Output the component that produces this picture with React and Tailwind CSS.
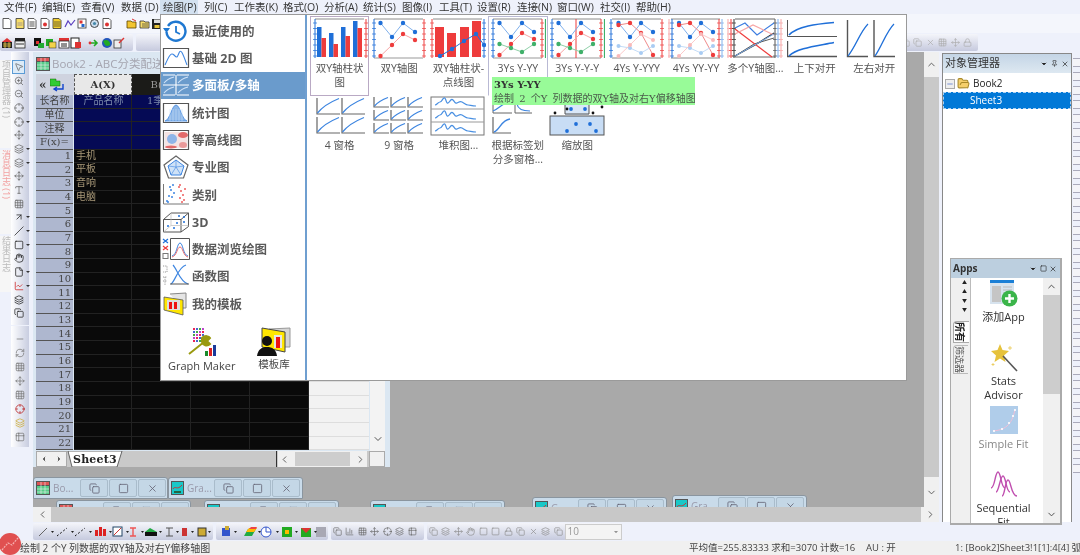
import {
  File, FolderOpen, Table2, LineChart, RefreshCw, Copy, Grid3x3,
  MousePointer2, ZoomIn, ZoomOut, Crosshair, Move, Type, Square, Hand, ArrowUpRight, Slash,
  ChevronUp, ChevronDown, ChevronLeft, ChevronRight, Minus, Pin, X, Lock, Layers, BarChart3,
} from "lucide-react";

const cjk = "font-['Open_Sans','Noto_Sans_CJK_SC',sans-serif]";
const serif = "font-['DejaVu_Serif','Noto_Sans_CJK_SC',serif]";

const menus = [
  ["文件(F)", "w-[38px]"], ["编辑(E)", "w-[39px]"], ["查看(V)", "w-[40px]"], ["数据 (D)", "w-[39px]"],
  ["绘图(P)", "w-[38px] pl-[3px] bg-[#d3e1f0]"], ["列(C)", "w-[36px] pl-[6px]"], ["工作表(K)", "w-[49px]"], ["格式(O)", "w-[41px]"],
  ["分析(A)", "w-[39px]"], ["统计(S)", "w-[39px]"], ["图像(I)", "w-[37px]"], ["工具(T)", "w-[38px]"],
  ["设置(R)", "w-[40px]"], ["连接(N)", "w-[40px]"], ["窗口(W)", "w-[43px]"], ["社交(I)", "w-[36px]"], ["帮助(H)", "w-[40px]"],
];

const sideItems = [
  ["最近使用的", <RecentIcon />], ["基础 2D 图", <WaveIcon />], ["多面板/多轴", <PanelsIcon />], ["统计图", <BellIcon />],
  ["等高线图", <ContourIcon />], ["专业图", <RadarIcon />], ["类别", <DotsIcon />], ["3D", <CubeIcon />],
  ["数据浏览绘图", <BrowseIcon />], ["函数图", <FuncIcon />], ["我的模板", <TemplateIcon />],
];

const B = "#1f6fd8", LB = "#7fb0ec", R = "#ee3c3c", LR = "#f7a6a6", G = "#3fb06a";
const X4 = [9.5, 21, 32, 44];

function Poly({ xs, ys, color, dot = 2.2, w = 1 }) {
  return (
    <>
      <polyline points={xs.map((x, i) => `${x},${ys[i]}`).join(" ")} fill="none" stroke={color} strokeWidth={w} />
      {xs.map((x, i) => <circle key={i} cx={x} cy={ys[i]} r={dot} fill={color} />)}
    </>
  );
}

function Ticks({ x, color, from = 5, to = 38, step = 5.5 }) {
  const ys = [];
  for (let y = from; y <= to; y += step) ys.push(y);
  return (
    <>
      <line x1={x} y1={1} x2={x} y2={40} stroke={color} strokeWidth="1" />
      {ys.map((y) => <line key={y} x1={x - 2} y1={y} x2={x + 2} y2={y} stroke={color} strokeWidth=".7" />)}
    </>
  );
}

function Tile({ children }) {
  return <svg width="56" height="42" viewBox="0 0 56 42">{children}</svg>;
}

function FrameTop({ right = 52 }) {
  return <line x1="3" y1="1" x2={right} y2="1" stroke="#8a8a8a" strokeWidth="1" />;
}

const topIcons = [
  <Tile>
    <FrameTop /><Ticks x={3} color={B} /><Ticks x={54} color={R} />
    {[[5, 9, 20], [17, 15, 26], [29, 9, 18], [41, 3, 10]].map(([x, a, b]) => (
      <g key={x}>
        <rect x={x} y={a} width="4.5" height={39 - a} fill={B} />
        <rect x={x + 4.5} y={b} width="4.5" height={39 - b} fill={R} />
      </g>
    ))}
  </Tile>,
  <Tile>
    <FrameTop /><line x1="3" y1="40" x2="52" y2="40" stroke="#999" /><Ticks x={3} color={B} /><Ticks x={53} color={R} />
    <Poly xs={X4} ys={[5, 19, 5, 14]} color={LB} dot={0} />
    <Poly xs={X4} ys={[38, 27, 16, 22]} color={LR} dot={0} />
    {X4.map((x, i) => <circle key={x} cx={x} cy={[5, 19, 5, 14][i]} r="2.2" fill={B} />)}
    {X4.map((x, i) => <circle key={x} cx={x} cy={[38, 27, 16, 22][i]} r="2.2" fill={R} />)}
  </Tile>,
  <Tile>
    <FrameTop /><Ticks x={2} color={R} /><Ticks x={54} color={B} />
    {[[5, 9], [17, 15], [30, 9], [42, 3]].map(([x, t]) => <rect key={x} x={x} y={t} width="9" height={39 - t} fill={R} />)}
    <Poly xs={[10, 22, 34, 46, 54]} ys={[38, 31, 23, 16, 27]} color={B} />
  </Tile>,
  <ThreeYs />,
  <ThreeYs split />,
  <FourYs />,
  <FourYs both />,
  <Tile>
    {[1, 4, 7].map((x, i) => <Ticks key={x} x={x} color={[LR, R, "#333"][i]} />)}
    {[48, 51, 54].map((x, i) => <Ticks key={x} x={x} color={["#555", LB, LR][i]} />)}
    <line x1="8" y1="1" x2="48" y2="1" stroke="#666" />
    <line x1="8" y1="39" x2="48" y2="39" stroke="#666" />
    <polyline points="8,38 28,27 47,15" fill="none" stroke="#333" strokeWidth="1.4" />
    <polyline points="8,38 27,26 47,20" fill="none" stroke="#333" strokeWidth=".8" />
    <polyline points="8,10 18,5 30,17 47,5" fill="none" stroke="#3d7de0" strokeWidth="1.2" />
    <polyline points="8,11 45,39" fill="none" stroke={R} strokeWidth="1.2" />
    <polyline points="8,16 26,7 47,17" fill="none" stroke={LR} strokeWidth="1.2" />
    <polyline points="8,38 47,16" fill="none" stroke={LB} strokeWidth="1" />
  </Tile>,
  <Tile>
    <path d="M.5 2V18.5H50" fill="none" stroke="#555" strokeWidth="1" />
    <path d="M2 17C10 8 30 6 47 4.5" fill="none" stroke={B} strokeWidth="1.6" />
    <path d="M.5 23V38.5H50" fill="none" stroke="#555" strokeWidth="1.4" />
    <path d="M2 38C10 30 30 28 47 24.5" fill="none" stroke={B} strokeWidth="1.6" />
  </Tile>,
  <Tile>
    <path d="M1.5 2V38.5H22" fill="none" stroke="#555" strokeWidth="1.4" />
    <path d="M2 38C10 28 14 14 22 6" fill="none" stroke={B} strokeWidth="1.2" />
    <path d="M28 2V38.5H49" fill="none" stroke="#555" strokeWidth="1.4" />
    <path d="M29 38C36 28 40 14 48 6" fill="none" stroke={B} strokeWidth="1.2" />
  </Tile>,
];

function ThreeYs({ split }) {
  return (
    <Tile>
      <FrameTop /><line x1="3" y1="40" x2="52" y2="40" stroke="#999" /><Ticks x={3} color={B} />
      <Ticks x={52} color={R} /><line x1="55.5" y1="1" x2="55.5" y2="40" stroke={G} strokeWidth="1.2" />
      {split && <line x1="27" y1="1" x2="27" y2="40" stroke={R} strokeWidth="1" />}
      <polyline points="9.5,5 21,19 32,5 44,14" fill="none" stroke={LB} />
      <polyline points="9.5,37 21,26 32,15 44,21" fill="none" stroke={LR} />
      <polyline points="9.5,26 21,30 32,34 44,26" fill="none" stroke="#8fd0a8" />
      {X4.map((x, i) => (
        <g key={x}>
          <circle cx={x} cy={[5, 19, 5, 14][i]} r="2.2" fill={B} />
          <circle cx={x} cy={[37, 26, 15, 21][i]} r="2.2" fill={R} />
          <circle cx={x} cy={[26, 30, 34, 26][i]} r="2.2" fill={G} />
        </g>
      ))}
    </Tile>
  );
}

function FourYs({ both }) {
  const xs = both ? [11, 22, 33, 45] : X4;
  return (
    <Tile>
      <FrameTop /><line x1="3" y1="40" x2="52" y2="40" stroke="#888" /><Ticks x={both ? 4 : 2} color={B} />
      {both && <Ticks x={1} color={LR} />}
      <Ticks x={both ? 51 : 53} color={R} />
      {both && <Ticks x={54} color={LB} />}
      <polyline points={xs.map((x, i) => `${x},${[5, 19, 5, 14][i]}`).join(" ")} fill="none" stroke={LB} />
      <polyline points={xs.map((x, i) => `${x},${[7, 5, 15, 37][i]}`).join(" ")} fill="none" stroke="#ef8a8a" />
      <polyline points={xs.map((x, i) => `${x},${[28, 30, 35, 28][i]}`).join(" ")} fill="none" stroke="#c4dcf7" />
      <polyline points={xs.map((x, i) => `${x},${[38, 27, 16, 22][i]}`).join(" ")} fill="none" stroke="#fbcaca" />
      {xs.map((x, i) => (
        <g key={x}>
          <circle cx={x} cy={[5, 19, 5, 14][i]} r="2.2" fill={B} />
          <circle cx={x} cy={[7, 5, 15, 37][i]} r="2.2" fill={R} />
          <circle cx={x} cy={[28, 30, 35, 28][i]} r="2" fill="#a9ccf3" />
          <circle cx={x} cy={[38, 27, 16, 22][i]} r="2" fill="#f9b9b9" />
        </g>
      ))}
    </Tile>
  );
}

function Panes({ cols, rows, cw, ch, ox = 0, oy = 0, weight = 1.2 }) {
  const cells = [];
  for (let r = 0; r < rows; r++) for (let c = 0; c < cols; c++) cells.push([ox + c * cw, oy + r * ch]);
  return (
    <>
      {cells.map(([x, y]) => (
        <g key={`${x}-${y}`}>
          <path d={`M${x + 1} ${y + 1}V${y + ch - 2}H${x + cw - 1}`} fill="none" stroke="#666" strokeWidth={weight} />
          <path d={`M${x + 1.5} ${y + ch - 3}C${x + cw * .3} ${y + ch * .45} ${x + cw * .6} ${y + ch * .25} ${x + cw - 2} ${y + 1.5}`} fill="none" stroke="#3d85e0" strokeWidth="1.2" />
        </g>
      ))}
    </>
  );
}

const wave = "c2 0 3-3 5-3s2-3 4-4 2 6 4 5 3-5 5-3 2 4 4 3 3-2 5-1 4 3 6 3 4 1 8 1";
const bottomIcons = [
  <Tile><Panes cols={2} rows={2} cw={25} ch={19} ox={4} oy={1} /></Tile>,
  <Tile><Panes cols={3} rows={3} cw={17} ch={13} ox={2} /></Tile>,
  <Tile>
    <rect x="1" y="1" width="53" height="38" fill="none" stroke="#777" />
    <line x1="1" y1="13" x2="54" y2="13" stroke="#999" /><line x1="1" y1="26" x2="54" y2="26" stroke="#999" />
    {[9, 22, 35].map((y) => <path key={y} d={`M5 ${y}${wave}`} fill="none" stroke="#4a90e2" strokeWidth="1.2" />)}
  </Tile>,
  <Tile>
    <path d="M3 8V17H22M25 8V17H42" fill="none" stroke="#666" strokeWidth="1" />
    <path d="M3 15C8 13 10 10 14 8M27 8C28 14 34 15 40 15" fill="none" stroke="#3d85e0" strokeWidth="1.2" />
    <path d="M3 21V37H21" fill="none" stroke="#666" strokeWidth="1.2" />
    <path d="M4 36C10 34 11 24 20 23" fill="none" stroke="#3d85e0" strokeWidth="1.4" />
  </Tile>,
  <Tile>
    <rect x="1" y="20" width="54" height="19" fill="#c8ddf5" stroke="#555" />
    <rect x="16" y="9" width="24" height="10" fill="#d9e7f8" />
    <path d="M16 8V18H40V8" fill="none" stroke="#555" />
    {[[6, 17], [18, 13], [44, 17], [53, 11]].map(([x, y]) => <circle key={x} cx={x} cy={y} r="1.4" fill="#111" />)}
    {[[22, 13], [36, 13], [18, 35], [27, 28], [41, 28], [47, 35]].map(([x, y]) => <circle key={`${x}${y}`} cx={x} cy={y} r="1.9" fill={B} />)}
  </Tile>,
];

const topLabels = [["双Y轴柱状", "图"], ["双Y轴图"], ["双Y轴柱状-", "点线图"], ["3Ys Y-YY"], ["3Ys Y-Y-Y"], ["4Ys Y-YYY"], ["4Ys YY-YY"], ["多个Y轴图..."], ["上下对开"], ["左右对开"]];
const bottomLabels = [["4 窗格"], ["9 窗格"], ["堆积图..."], ["根据标签划", "分多窗格..."], ["缩放图"]];

function IconBox({ children }) {
  return <svg width="28" height="24" viewBox="0 0 28 24" className="shrink-0">{children}</svg>;
}
function BoxFrame() {
  return <path d="M1.5 2.5H26.5V21.5H1.5Z" fill="#fff" stroke="#555" strokeWidth="1.2" />;
}
function RecentIcon() {
  return (
    <IconBox>
      <path d="M6 7A9.5 9.5 0 1 1 4.5 13" fill="none" stroke="#1f78d1" strokeWidth="2.4" />
      <path d="M1 9h7l-3.5 5z" fill="#1f78d1" />
      <path d="M14 7V13L18 15" fill="none" stroke="#1f78d1" strokeWidth="1.8" />
    </IconBox>
  );
}
function WaveIcon() {
  return <IconBox><BoxFrame /><path d="M3 19C7 10 9 6 12 9S15 12 17 7 21 8 25 19" fill="none" stroke="#3d85e0" strokeWidth="1.1" /></IconBox>;
}
function PanelsIcon() {
  return (
    <IconBox>
      <g fill="none" stroke="#fff" strokeWidth="1.1">
        <path d="M1 2H13M15 2H27M1 12H27M14 2V22M1 22H13M15 22H27" />
        <path d="M2 10C5 6 8 5 12 4M16 10C19 6 22 5 26 4M2 20C5 16 8 15 12 14M16 20C19 16 22 15 26 14" stroke="#cfe2f7" />
      </g>
    </IconBox>
  );
}
function BellIcon() {
  return (
    <IconBox>
      <BoxFrame />
      <path d="M3 20C8 19 10 4 14 4S20 19 25 20Z" fill="#8fb8e8" stroke="#3d85e0" strokeWidth=".8" />
      {[8, 11, 14, 17, 20].map((x) => <line key={x} x1={x} y1="8" x2={x} y2="20" stroke="#c9dff5" strokeWidth=".6" />)}
    </IconBox>
  );
}
function ContourIcon() {
  return (
    <IconBox>
      <BoxFrame />
      <rect x="3" y="4" width="22" height="16" fill="#f4e3e3" />
      <ellipse cx="10" cy="11" rx="5" ry="5" fill="#8fb5e8" />
      <ellipse cx="21" cy="7" rx="5" ry="3" fill="#e26a6a" />
      <ellipse cx="21" cy="17" rx="4" ry="3" fill="#ea9a9a" />
      <ellipse cx="9" cy="19" rx="6" ry="1.5" fill="#e26a6a" />
    </IconBox>
  );
}
function RadarIcon() {
  return (
    <IconBox>
      <path d="M14 1L26 10L21.5 23H6.5L2 10Z" fill="#fff" stroke="#666" strokeWidth="1.2" />
      <path d="M14 5L22 11L19 20L9 20L6 11Z" fill="#cfe2f7" stroke="#3d85e0" />
      <path d="M14 12V5M14 12L22 11M14 12L19 20M14 12L9 20M14 12L6 11" stroke="#3d85e0" strokeWidth=".6" />
    </IconBox>
  );
}
function DotsIcon() {
  const blue = [[5, 19], [7, 14], [9, 8], [6, 20], [10, 15], [12, 11], [8, 5], [11, 3]];
  const red = [[17, 5], [19, 9], [21, 13], [18, 16], [22, 18], [20, 20], [23, 7], [18, 3]];
  return (
    <IconBox>
      <path d="M1.5 2V22H27" fill="none" stroke="#777" />
      {blue.map(([x, y]) => <circle key={`${x}${y}`} cx={x} cy={y} r="1" fill="#3d85e0" />)}
      {red.map(([x, y]) => <circle key={`${x}${y}`} cx={x} cy={y} r="1" fill="#ee5c5c" />)}
    </IconBox>
  );
}
function CubeIcon() {
  return (
    <IconBox>
      <path d="M1.5 9.5L9 3H26.5V16.5L19 22H1.5ZM1.5 9.5H19V22M19 9.5L26.5 3" fill="#fff" stroke="#555" />
      <path d="M1.5 22L9 15.5V3M9 15.5H26.5" fill="none" stroke="#bbb" strokeWidth=".7" />
      {[[6, 16], [12, 18], [15, 13], [17, 6], [22, 7], [22, 12]].map(([x, y]) => <circle key={`${x}${y}`} cx={x} cy={y} r="1" fill={B} />)}
    </IconBox>
  );
}
function BrowseIcon() {
  return (
    <IconBox>
      <path d="M8.5 1.5H27.5V22.5H8.5Z" fill="#fff" stroke="#555" />
      <path d="M10 19C15 18 15 6 18 6S21 18 26 19" fill="none" stroke="#3d85e0" />
      <path d="M10 20C15 19 15 10 18 10S21 19 26 20" fill="none" stroke="#ee6a6a" />
      <path d="M1 2L6 6M6 2L1 6" stroke={B} strokeWidth="1.2" />
      <path d="M1 9L6 13M6 9L1 13" stroke={R} strokeWidth="1.2" />
      <rect x="1" y="16.5" width="5" height="5" fill="#fff" stroke="#777" />
    </IconBox>
  );
}
function FuncIcon() {
  return (
    <IconBox>
      <path d="M9 20C13 18 16 3 24 1M11 1C15 5 18 18 26 20" fill="none" stroke="#3d85e0" strokeWidth="1.2" />
      <path d="M8 20H27" stroke="#555" />
      <path d="M1 2H5V8H1M1 13H5M1 17H5M3 13V21" fill="none" stroke="#999" strokeDasharray="1.2 1" />
    </IconBox>
  );
}
function TemplateIcon() {
  return (
    <IconBox>
      <path d="M8 2L24 1V16H20" fill="#e5e5e5" stroke="#888" />
      <path d="M2 5L21 8V23L2 18Z" fill="#ffe600" stroke="#555" strokeWidth=".8" />
      <rect x="5" y="8" width="13" height="10" fill="#ddd" />
      <rect x="7" y="10" width="3" height="7" fill="#e11" /><rect x="12" y="10" width="3" height="7" fill="#e11" />
    </IconBox>
  );
}

function Dropdown() {
  return (
    <div className={`absolute left-[160px] top-[14px] flex h-[367px] w-[747px] border border-[#9a9a9a] bg-white ${cjk}`}>
      <div className="flex w-[144px] flex-col pt-[2px]">
        {sideItems.map(([label, icon], i) => (
          <div key={label} className={`flex h-[27.3px] items-center gap-[2px] pl-[1px] text-[12.5px] font-bold ${i === 2 ? "bg-[#6a9bcc] text-white" : "text-[#5a5a5a]"}`}>
            {icon}
            <span className="whitespace-nowrap pt-[3px]">{label}</span>
          </div>
        ))}
        <div className="mt-[10px] flex justify-between pl-[7px] pr-[14px]">
          <div className="flex flex-col items-center">
            <svg width="30" height="30" viewBox="0 0 30 30">
              {[0, 1, 2, 3].map((c) => [0, 1, 2, 3, 4].map((r) => <rect key={`${c}${r}`} x={6 + c * 3} y={1 + r * 3} width="2" height="2" fill={["#e25", "#46c", "#4a4", "#b4c"][(c + r) % 4]} />))}
              <path d="M2 27L17 15M15 11C18 8 22 9 23 11L20 14L23 17C20 20 16 18 15 15Z" fill="#9a9a10" stroke="#9a9a10" strokeWidth="2" />
              <rect x="18" y="24" width="3" height="5" fill="#1a8a2a" /><rect x="22" y="21" width="3" height="8" fill="#d22" /><rect x="26" y="18" width="3" height="11" fill="#1a3a9a" />
            </svg>
            <span className="mt-[1px] whitespace-nowrap text-[11px] text-[#444]">Graph Maker</span>
          </div>
          <div className="flex flex-col items-center">
            <svg width="34" height="30" viewBox="0 0 34 30">
              <path d="M12 2L33 1V20H26" fill="#d5d5d5" stroke="#999" />
              <path d="M5 1L28 5V25L5 20Z" fill="#ffe600" stroke="#444" />
              <rect x="17" y="8" width="8" height="13" fill="#e5e5e5" /><rect x="19" y="10" width="4" height="11" fill="#e11" />
              <circle cx="10" cy="14" r="5" fill="#111" /><path d="M0 29C1 22 5 20 10 20S19 22 20 29Z" fill="#111" />
            </svg>
            <span className="whitespace-nowrap text-[10.5px] text-[#444]">模板库</span>
          </div>
        </div>
      </div>
      <div className="w-[2px] bg-[#6f9fd0]" />
      <div className="flex-1 pl-[3px] pt-[1px] text-center text-[10.5px] leading-[14px] text-[#555]">
        <div className="grid grid-cols-[repeat(10,59.4px)]">
          {topIcons.map((icon, i) => (
            <div key={i} className={`flex h-[80px] flex-col items-center border pt-[1px] ${i === 0 ? "border-[#b9a9c4]" : i === 3 ? "border-[#b9b9d4] border-b-transparent" : "border-transparent"}`}>
              {icon}
              <div className="mt-[1px] whitespace-nowrap">{topLabels[i].map((t) => <div key={t}>{t}</div>)}</div>
            </div>
          ))}
          {bottomIcons.map((icon, i) => (
            <div key={i} className="flex flex-col items-center">
              {icon}
              <div className="whitespace-nowrap">{bottomLabels[i].map((t) => <div key={t}>{t}</div>)}</div>
            </div>
          ))}
        </div>
      </div>
      <div className={`absolute left-[331px] top-[62px] h-[28px] w-[203px] bg-[#98fb98] px-[2px] pt-[1px] text-[10px] leading-[13.5px] text-[#333] ${serif}`}>
        <div className="font-bold">3Ys Y-YY</div>
        <div className="whitespace-nowrap text-[#4a5a4a] [word-spacing:2px]">绘制 2 个Y 列数据的双Y轴及对右Y偏移轴图</div>
      </div>
    </div>
  );
}

function TableIcon() {
  return (
    <svg width="14" height="14" viewBox="0 0 14 14" className="shrink-0">
      <rect width="14" height="14" fill="#555" /><rect x="1" y="1" width="12" height="3" fill="#d55" />
      <rect x="1" y="5" width="12" height="8" fill="#5c8" />
      <path d="M5 1V13M9 1V13M1 8H13M1 11H13" stroke="#eee" strokeWidth=".6" />
    </svg>
  );
}
function GraphIcon({ small }) {
  return (
    <svg width="13" height="14" viewBox="0 0 13 14" className="shrink-0">
      <rect width="13" height="14" fill="#555" /><rect x="1" y="1" width="11" height="12" fill="#18c8c8" />
      <path d="M2 8C4 4 6 10 11 4" stroke="#c33" fill="none" />
      {!small && <rect x="3" y="10" width="7" height="2" fill="#264" />}
    </svg>
  );
}

function MinWin({ className, icon, title }) {
  return (
    <div className={`absolute flex h-[22px] w-[135px] items-center gap-[1px] rounded-t-[3px] border border-[#8a959f] bg-[#c9dbea] pl-[2px] ${className}`}>
      {icon}
      <span className={`w-[28px] shrink-0 pl-[2px] text-[10px] text-[#99a] ${cjk}`}>{title}</span>
      {[Copy, Square, X].map((Icon, i) => (
        <div key={i} className="flex h-[18px] w-[28px] shrink-0 items-center justify-center rounded-[2px] border border-[#a9bccb] bg-[#c4d7e6]">
          <Icon size={11} strokeWidth={1.8} color="#667" />
        </div>
      ))}
    </div>
  );
}

const rowHeader = "flex items-center border-b border-[#555] bg-[#aeb7cf] text-[#444]";
const rows = ["长名称", "单位", "注释", "F(x)=", ...Array.from({ length: 22 }, (_, i) => String(i + 1))];
const names = ["手机", "平板", "音响", "电脑"];

function SheetGrid() {
  return (
    <div className={`flex flex-col text-[10px] ${serif}`}>
      <div className="flex h-[21px]">
        <div className="flex w-[38px] items-center gap-[3px] bg-[#cfd3df] pl-[3px]">
          <span className="text-[12px] font-bold leading-none text-[#333]">«</span>
          <svg width="14" height="14" viewBox="0 0 14 14"><path d="M0 1H6V3H10V8H0Z" fill="#3c3" stroke="#160" strokeWidth=".5" /><path d="M13 6V11H5M7 9L4 11L7 13" fill="none" stroke="#14c" strokeWidth="1.4" /></svg>
        </div>
        <div className="flex w-[58px] items-center justify-center border border-dashed border-[#555] bg-[#e8e8e8] font-bold text-[#333]">A(X)</div>
        <div className="flex w-[59px] items-center justify-center bg-[#1b1b18] text-[#999]">B(Y)</div>
        <div className="w-[118px] bg-[#1b1b18]" />
        <div className="w-[60px] bg-[#f0f0f0]" />
      </div>
      {rows.map((r, i) => {
        const meta = i < 4;
        return (
          <div key={r} className="flex h-[13.68px]">
            <div className={`${rowHeader} w-[37px] ${meta ? "justify-center" : "justify-end pr-[2px]"} leading-none`}>{r}</div>
            <div className={`ml-[1px] w-[58px] border-b border-r border-[#222] pl-[2px] leading-[12px] ${meta ? "bg-[#050a55]" : "bg-[#0a0a0a]"} ${i > 3 && i < 8 ? "text-[#a89878]" : "text-[#7a88aa]"} ${i === 0 ? "text-center" : ""}`}>
              {i === 0 ? "产品名称" : names[i - 4]}
            </div>
            <div className={`w-[59px] border-b border-r border-[#222] pl-[15px] leading-[12px] text-[#7a88aa] ${meta ? "bg-[#050a55]" : "bg-[#0a0a0a]"}`}>{i === 0 ? "1季" : ""}</div>
            <div className={`w-[59px] border-b border-r border-[#222] ${meta ? "bg-[#050a55]" : "bg-[#0a0a0a]"}`} />
            <div className={`w-[59px] border-b border-r border-[#222] ${meta ? "bg-[#050a55]" : "bg-[#0a0a0a]"}`} />
            <div className="w-[60px] border-b border-[#ddd] bg-[#f2f2f2]" />
          </div>
        );
      })}
    </div>
  );
}

function BookWindow() {
  return (
    <div className="absolute left-0 top-0 flex h-[415px] w-[357px] flex-col bg-[#dbe7f2] pl-[3px] pr-[5px]">
      <div className="flex h-[22px] shrink-0 items-center gap-[2px] pl-[0px] pt-[2px]">
        <TableIcon />
        <span className={`whitespace-nowrap text-[11.5px] text-[#a5a5b0] ${cjk}`}>Book2 - ABC分类配送.xlsx</span>
      </div>
      <div className="flex min-h-0 flex-1 overflow-hidden">
        <SheetGrid />
        <div className="ml-[1px] flex w-[16px] flex-col items-center justify-end bg-[#f3f3f3] pb-[6px]"><ChevronDown size={12} color="#555" /></div>
      </div>
      <div className="flex h-[16px] shrink-0 items-center bg-[#c9c9c9]">
        <div className="flex h-full w-[31px] items-center justify-around border border-[#aaa] bg-[#f0f0f0]">
          <ChevronLeft size={8} fill="#555" color="#555" /><ChevronRight size={8} fill="#555" color="#555" />
        </div>
        <svg width="56" height="16" viewBox="0 0 56 16" className="shrink-0">
          <path d="M1 0L5 16H50L55 0Z" fill="#fff" stroke="#444" strokeWidth=".8" />
          <text x="6" y="12" fontSize="11" fontWeight="600" letterSpacing=".2" fill="#222" fontFamily="DejaVu Serif">Sheet3</text>
        </svg>
        <div className="h-full flex-1 border-r border-[#333]" />
        <div className="ml-[1px] flex h-full w-[89px] items-center justify-between bg-[#f0f0f0] px-[1px]">
          <ChevronLeft size={11} color="#555" /><div className="h-[14px] w-[55px] bg-[#cdcdcd]" /><ChevronRight size={11} color="#555" />
        </div>
        <div className="ml-[2px] h-full w-[16px] border border-[#aaa] bg-[#f0f0f0]" />
      </div>
    </div>
  );
}

function Desktop() {
  return (
    <div className="relative flex-1 overflow-hidden bg-[#a9a9a9]">
      <BookWindow />
      <MinWin className="left-[23px] top-[448px]" icon={<TableIcon />} title="Bo" />
      <MinWin className="left-[171px] top-[448px]" icon={<GraphIcon />} title="Gr" />
      <MinWin className="left-[337px] top-[448px]" icon={<GraphIcon />} title="G" />
      <MinWin className="left-[499px] top-[445px]" icon={<GraphIcon />} title="G" />
      <MinWin className="left-[639px] top-[443px]" icon={<GraphIcon small />} title="Gra" />
      <MinWin className="left-0 top-[425px]" icon={<TableIcon />} title="Bo..." />
      <MinWin className="left-[135px] top-[425px]" icon={<GraphIcon />} title="Gra..." />
    </div>
  );
}

function ObjectManager() {
  return (
    <div className={`mt-[1px] h-[470px] w-[130px] border border-[#888] bg-white ${cjk}`}>
      <div className="flex h-[19px] items-center bg-gradient-to-b from-[#c4d5e6] to-[#dde8f1] pl-[2px] pr-[2px]">
        <span className="flex-1 text-[11px] text-[#333]">对象管理器</span>
        <ChevronDown size={8} fill="#222" color="#222" />
        <Pin size={7} color="#222" className="ml-[3px]" />
        <X size={8} color="#222" className="ml-[3px]" />
      </div>
      <div className="pt-[3px] text-[10px]">
        <div className="flex h-[15px] items-center gap-[2px] pl-[2px] text-[#222]">
          <div className="flex h-[10px] w-[10px] items-center justify-center border border-[#aaa] bg-[#eee]"><Minus size={8} color="#46c" /></div>
          <FolderOpen size={13} fill="#f5cf6b" color="#a98a2a" />
          <span className="ml-[1px]">Book2</span>
        </div>
        <div className="mt-[1px] flex h-[17px] items-center border border-dashed border-[#a9d2f5] bg-[#0078d7] pl-[26px] text-white">Sheet3</div>
      </div>
    </div>
  );
}

function AppsPanel() {
  return (
    <div className={`absolute left-[950px] top-[258px] flex h-[267px] w-[112px] flex-col border border-[#aaa] border-b-2 border-r-2 bg-[#f0f0f0] ${cjk}`}>
      <div className="flex h-[19px] shrink-0 items-center bg-[#bccfdf] pl-[2px] pr-[3px]">
        <span className="flex-1 text-[10px] font-bold text-[#333]">Apps</span>
        <ChevronDown size={8} fill="#222" color="#222" />
        <Square size={7} color="#222" className="ml-[3px]" />
        <X size={8} color="#222" className="ml-[2px]" />
      </div>
      <div className="flex min-h-0 flex-1">
        <div className="w-[19px] shrink-0">
          <div className="flex flex-col items-center gap-[4px] pl-[8px] pt-[2px] text-[5px] leading-[5px] text-[#222]">
            <span>▲</span><span>▲</span><span>▼</span><span>▼</span>
          </div>
          <div className="ml-[2px] mt-[9px] w-[16px] rounded-tl-[4px] border border-r-0 border-[#aaa] bg-white py-[3px] text-center text-[10px] font-bold leading-[13px] text-[#222] [text-orientation:sideways] [writing-mode:vertical-rl]">所有</div>
          <div className="ml-[2px] mt-[2px] w-[15px] rounded-tl-[4px] border border-r-0 border-[#bbb] py-[3px] text-center text-[9px] leading-[12px] text-[#555] [text-orientation:sideways] [writing-mode:vertical-rl]">筛选器</div>
        </div>
        <div className="w-[73px] shrink-0 overflow-hidden border-l border-[#bbb] bg-white pr-[7px] text-center text-[11px] leading-[14px] text-[#333]">
          <div className="flex h-[65px] flex-col items-center pt-[2px]">
            <svg width="28" height="27" viewBox="0 0 28 27">
              <rect x="0" y="1" width="24" height="23" fill="#d7e3ee" /><rect width="24" height="3" fill="#1a7fd6" />
              <rect x="2" y="6" width="9" height="16" fill="#c5c5c5" /><path d="M13 7H22M13 10H22M13 13H22" stroke="#bbb" />
              <circle cx="19.5" cy="18.5" r="8" fill="#3bb54a" /><path d="M19.5 14V23M15 18.5H24" stroke="#fff" strokeWidth="2.4" />
            </svg>
            <span className="mt-[3px] whitespace-nowrap">添加App</span>
          </div>
          <div className="flex h-[63px] flex-col items-center">
            <svg width="28" height="30" viewBox="0 0 28 30">
              <path d="M10 1L12.5 7L19 8L14 12.5L15.5 19L10 15.5L4.5 19L6 12.5L1 8L7.5 7Z" fill="#e6c23c" />
              <line x1="13" y1="13" x2="27" y2="28" stroke="#555" strokeWidth="1.6" />
              <path d="M20 3V7M18 5H22M3 20V23M1.5 21.5H4.5" stroke="#e6c23c" strokeWidth=".7" />
            </svg>
            <span className="mt-[1px]">Stats</span><span>Advisor</span>
          </div>
          <div className="flex h-[64px] flex-col items-center">
            <svg width="28" height="28" viewBox="0 0 28 28">
              <rect width="28" height="28" fill="#b0cdea" />
              <path d="M3 25C14 24 22 20 25 3" fill="none" stroke="#f0c0d8" strokeWidth="1" />
              {[[4, 25], [12, 23], [19, 17], [23, 10], [25, 4]].map(([x, y]) => <circle key={x} cx={x} cy={y} r="1.1" fill="#fff" />)}
            </svg>
            <span className="mt-[3px] text-[#888]">Simple Fit</span>
          </div>
          <div className="flex flex-col items-center">
            <svg width="28" height="28" viewBox="0 0 28 28">
              <g fill="none" stroke="#c050b0" strokeWidth="1.4">
                <path d="M1 18C5 18 5 2 8 2S11 18 15 18" />
                <path d="M6 22C9 22 10 6 13 6S16 22 20 22" />
                <path d="M12 26C15 26 15 10 18 10S21 26 27 26" />
              </g>
            </svg>
            <span className="mt-[3px]">Sequential</span><span>Fit</span>
          </div>
        </div>
        <div className="flex flex-1 flex-col items-center">
          <ChevronUp size={11} color="#444" className="my-[3px]" />
          <div className="h-[99px] w-full bg-[#cdcdcd]" />
          <ChevronDown size={11} color="#444" className="mt-auto mb-[3px]" />
        </div>
      </div>
    </div>
  );
}

// tiny toolbar glyphs: a few kinds, each with its own colours
function Mini({ k }) {
  const doc = (fill, extra) => (
    <>
      <path d="M2 .5H8L10 2.5V10.5H2Z" fill={fill} stroke="#333" strokeWidth=".8" />
      {extra}
    </>
  );
  const bits = {
    doc: doc("#fff"),
    ydoc: doc("#f7dd6a", <path d="M3.5 5H8.5M3.5 7H8.5" stroke="#a98" />),
    gdoc: doc("#fff", <path d="M3 4H9M3 6H9M3 8H9M5 3V9M7 3V9" stroke="#555" strokeWidth=".6" />),
    rdoc: doc("#fff", <circle cx="6" cy="6.5" r="2" fill="#d33" />),
    ytable: doc("#f3cf2e", <path d="M3 4H9M3 6H9M3 8H9" stroke="#333" strokeWidth=".7" />),
    chart: <path d="M1 9L4 3L7 7L11 2" fill="none" stroke="#5a3fc0" strokeWidth="1.2" />,
    rb: <><rect x="2" y="1" width="8" height="9" fill="#fff" stroke="#333" strokeWidth=".8" /><rect x="3.5" y="2.5" width="3" height="3" fill="#d33" /><rect x="5.5" y="6" width="3" height="3" fill="#26c" /></>,
    mag: <><circle cx="5.5" cy="5.5" r="4" fill="#cde" stroke="#444" /><circle cx="5.5" cy="5.5" r="1.6" fill="#48a" /></>,
    folder: <><path d="M1 3H5L6 4H10V10H1Z" fill="#f2c531" stroke="#5a4500" strokeWidth=".8" /><path d="M6 1L10 3" stroke="#d33" /></>,
    ftable: <><path d="M1 3H5L6 4H10V10H1Z" fill="#f7dd6a" stroke="#333" strokeWidth=".8" /><path d="M3 6H9M3 8H9" stroke="#333" strokeWidth=".7" /></>,
    save: <><rect x="1" y="1" width="10" height="10" fill="#222" /><rect x="3" y="1.5" width="6" height="3.5" fill="#ddd" /><rect x="3.5" y="7" width="5" height="3" fill="#e9c53a" /></>,
    t1: <><path d="M1 5L6 1L11 5Z" fill="#d33" /><rect x="1" y="5" width="10" height="6" fill="#222" /><path d="M2 7H10M2 9H10M4 5V11M8 5V11" stroke="#f2d24a" strokeWidth=".8" /></>,
    t2: <><rect x="1" y="1" width="10" height="3" fill="#222" /><rect x="1" y="4" width="10" height="7" fill="#eee" stroke="#222" strokeWidth=".8" /><path d="M2 7H10" stroke="#333" /></>,
    t3: <><rect x="1" y="1" width="7" height="8" fill="#111" /><rect x="5" y="6" width="6" height="5" fill="#2a3" /><rect x="3" y="4" width="3" height="3" fill="#d33" /></>,
    t4: <><rect x="1" y="2" width="7" height="7" fill="#2a2" /><rect x="4" y="5" width="7" height="6" fill="#f2d24a" stroke="#222" strokeWidth=".5" /></>,
    t5: <><rect x="1" y="1" width="10" height="3" fill="#d33" /><rect x="1" y="4" width="10" height="7" fill="#fff" stroke="#222" strokeWidth=".8" /><path d="M3 7H9M3 9H9" stroke="#222" /></>,
    t6: <><rect x="1" y="1" width="8" height="10" fill="#fff" stroke="#222" /><rect x="5" y="5" width="6" height="6" fill="#d33" /></>,
    arr: <><path d="M1 6H9M6 3L9 6L6 9" stroke="#2a2" fill="none" strokeWidth="1.6" /><circle cx="2" cy="6" r="1.4" fill="#d33" /></>,
    globe: <><circle cx="6" cy="6" r="5" fill="#25b" /><path d="M2 4C5 2 8 3 9 6S6 10 4 8" fill="#2a2" /></>,
    pen: <><rect x="1" y="3" width="7" height="8" fill="#eee" stroke="#333" strokeWidth=".8" /><path d="M6 6L11 1" stroke="#d33" strokeWidth="1.4" /></>,
  };
  return <svg width="12" height="12" viewBox="0 0 12 12" className="shrink-0">{bits[k]}</svg>;
}

function Row({ icons, color = "#444", size = 10, className = "" }) {
  return (
    <div className={`flex items-center ${className}`}>
      {icons.map((Icon, i) => (
        <div key={i} className="flex h-full w-[12.5px] items-center justify-center">
          <Icon size={size} color={color} strokeWidth={1.7} />
        </div>
      ))}
    </div>
  );
}

const tri = new Set([4, 6, 7, 11, 12, 13, 15, 16]);
const leftTools = [MousePointer2, ZoomIn, ZoomOut, Crosshair, Crosshair, Move, Layers, Layers, Move, Type, Grid3x3, ArrowUpRight, Slash, Square, Hand, File, LineChart, Layers, Copy];
const leftTools2 = [Minus, RefreshCw, Grid3x3, Move, Grid3x3, Crosshair, Layers, Table2];

function LeftDock() {
  return (
    <div className="flex w-[33px] shrink-0 bg-[#eef1fb]">
      <div className={`flex w-[11px] flex-col gap-[2px] pt-[8px] text-[9px] leading-[9px] ${cjk}`}>
        <div className="h-[88px] bg-[#f6f6f6] text-[#bbb] [writing-mode:vertical-rl]">项目管理器 (1)</div>
        <div className="h-[84px] bg-[#f6f6f6] text-[#f2a0a0] [writing-mode:vertical-rl]">消息日志 (1)</div>
        <div className="h-[56px] bg-[#f6f6f6] text-[#bbb] [writing-mode:vertical-rl]">结果日志</div>
      </div>
      <div className="w-[19px] pr-[1px]">
        <div className="flex h-[273px] flex-col bg-gradient-to-r from-white to-[#c8cde0] pt-[8px]">
          {leftTools.map((Icon, i) => (
            <div key={i} className="flex h-[13.7px] shrink-0 items-center gap-[1px] pl-[1px]">
              <div className={`flex h-[13.7px] w-[13px] shrink-0 items-center justify-center ${i === 0 ? "border border-[#5b9bd5] bg-[#dcebf8]" : ""}`}>
                <Icon size={10} color={i === 16 ? "#c22" : i < 11 ? "#666" : "#222"} strokeWidth={1.8} />
              </div>
              {tri.has(i) && <div className="h-0 w-0 border-x-2 border-t-2 border-x-transparent border-t-[#333]" />}
            </div>
          ))}
        </div>
        <div className="mt-[1px] flex h-[121px] flex-col items-center bg-gradient-to-r from-white to-[#c8cde0] pt-[6px]">
          {leftTools2.map((Icon, i) => (
            <div key={i} className="flex h-[14px] items-center justify-center">
              <Icon size={10} color={i === 5 ? "#b22" : i === 6 ? "#ca3" : "#777"} strokeWidth={1.8} />
            </div>
          ))}
        </div>
      </div>
    </div>
  );
}

const gradBar = "h-[17px] rounded-[2px] bg-gradient-to-b from-[#f4f5fa] to-[#c6cade]";

function BottomToolbar() {
  return (
    <div className="flex h-[19px] shrink-0 items-center gap-[3px] bg-[#eef1fb] pl-[33px]">
      <div className={`${gradBar} w-[180px]`}>
        <svg width="180" height="17" viewBox="0 0 180 17">
          <path d="M6 13L14 5" stroke="#666" />
          <path d="M24 13L34 5M42 13L52 5" stroke="#111" strokeDasharray="2 2" />
          <rect x="62" y="7" width="3" height="6" fill="#d22" /><rect x="66" y="4" width="3" height="9" fill="#d22" /><rect x="70" y="6" width="3" height="7" fill="#d22" />
          <rect x="80" y="4" width="9" height="9" fill="#fff" stroke="#246" /><path d="M81 12L88 5" stroke="#c33" />
          <path d="M97 5H103M100 5V13M97 13H103" stroke="#e55" strokeWidth="1.4" />
          <rect x="112" y="9" width="12" height="4" fill="#111" /><path d="M112 9L117 5L124 9" fill="#2a4" />
          <path d="M133 5H140M133 13H140M136 5V13" stroke="#555" />
          <rect x="149" y="5" width="5" height="8" fill="#c33" />
          <rect x="165" y="5" width="8" height="8" fill="#ca3" stroke="#333" />
          {[18, 38, 56, 76, 93, 108, 126, 143, 158, 175].map((x) => <path key={x} d={`M${x} 8h3l-1.5 2z`} fill="#222" />)}
        </svg>
      </div>
      <div className={`${gradBar} w-[112px]`}>
        <svg width="112" height="17" viewBox="0 0 112 17">
          <rect x="6" y="5" width="8" height="8" fill="#35c" /><rect x="9" y="3" width="4" height="4" fill="#ca3" />
          <path d="M28 13L32 6H40L36 13Z" fill="#2a4" /><path d="M30 9L33 5H41L38 9Z" fill="#fb0" /><path d="M33 6L35 4H41L40 6Z" fill="#e44" />
          <circle cx="50" cy="9" r="5" fill="#fff" stroke="#35c" /><path d="M50 9V4M50 9H55" stroke="#35c" />
          <rect x="66" y="4" width="10" height="10" fill="#2a2" /><rect x="69" y="7" width="4" height="4" fill="#fb0" />
          <rect x="85" y="5" width="10" height="9" fill="#2a2" /><path d="M85 5L90 10L95 5" fill="#d33" />
          <rect x="100" y="4" width="10" height="10" fill="#a8a8b4" />
          {[18, 42, 60, 79, 98].map((x) => <path key={x} d={`M${x} 8h3l-1.5 2z`} fill="#222" />)}
        </svg>
      </div>
      <Row icons={[Copy, BarChart3, Grid3x3, Move, Crosshair, Layers, Table2]} color="#666" size={9} className={`${gradBar} w-[93px]`} />
      <div className={`${gradBar} flex w-[195px] items-center`}>
        <Row icons={[Copy, Layers, Move, Hand, Square, Square, Lock, Copy, X, Layers, Copy]} color="#8a8a8a" size={9} className="h-full" />
        <div className="flex h-[16px] flex-1 items-center justify-between border border-[#ccc] bg-[#f4f4f4] pl-[2px] pr-[2px] text-[10px] text-[#999]">
          10 <ChevronDown size={6} fill="#777" color="#777" />
        </div>
      </div>
    </div>
  );
}

const row1 = ["doc", "ydoc", "gdoc", "rdoc", "ytable", "chart", "rb", "mag", "rdoc"];
const row1b = ["folder", "ftable", "save"];
const row2 = ["t1", "t2"];
const row2b = ["t3", "t4", "t5", "t6"];
const row2c = ["arr", "globe", "pen"];

export default function App() {
  return (
    <div className={`relative flex h-[555px] w-[1080px] flex-col overflow-hidden bg-[#eef1fb] blur-[0.45px] ${cjk}`}>
      <div className="flex h-[14px] shrink-0 pl-[4px] text-[10.5px] leading-[14px] text-[#333]">
        {menus.map(([t, w]) => <div key={t} className={`whitespace-nowrap ${w}`}>{t}</div>)}
      </div>
      <div className="flex h-[19px] shrink-0 items-center gap-[0.5px] bg-[#f4f6fc] pl-[1px]">
        {row1.map((k, i) => <Mini key={i} k={k} />)}
        <div className="w-[12px]" />
        {row1b.map((k) => <Mini key={k} k={k} />)}
      </div>
      <div className="flex h-[19px] shrink-0 items-center gap-[3px]">
        <div className={`${gradBar} flex w-[133px] items-center gap-[0.5px] pl-[1px]`}>
          {row2.map((k) => <Mini key={k} k={k} />)}
          <div className="w-[6px]" />
          {row2b.map((k) => <Mini key={k} k={k} />)}
          <div className="w-[5px]" />
          {row2c.map((k) => <Mini key={k} k={k} />)}
        </div>
        <div className={`${gradBar} mr-[102px] flex flex-1 justify-end pr-[4px]`}>
          <Row icons={[Copy, Copy, X, Grid3x3, Move, Lock]} color="#aaa" size={9} className="h-full" />
        </div>
      </div>
      <div className="flex h-[470px] shrink-0">
        <LeftDock />
        <div className="flex w-[907px] flex-col">
          <div className="flex h-[455px]">
            <Desktop />
            <div className="flex w-[15px] flex-col bg-[#c9c9c9]">
              <div className="flex h-[25px] items-center justify-center bg-[#f0f0f0]"><ChevronUp size={11} color="#555" /></div>
              <div className="mt-auto flex h-[30px] items-center justify-center bg-[#f0f0f0]"><ChevronDown size={11} color="#555" /></div>
            </div>
          </div>
          <div className="flex h-[15px] items-center justify-between bg-[#c8c8c8]">
            <div className="flex h-full w-[18px] items-center justify-center bg-[#f0f0f0]"><ChevronLeft size={11} color="#555" /></div>
            <div className="flex h-full w-[18px] items-center justify-center bg-[#f0f0f0]"><ChevronRight size={11} color="#555" /></div>
          </div>
        </div>
        <div className="ml-[3px]"><ObjectManager /></div>
        <div className="ml-[1px] flex w-[7px] flex-col items-center gap-[5px] overflow-hidden pt-[6px]">
          {Array.from({ length: 30 }, (_, i) => <div key={i} className="h-[9px] w-[9px] shrink-0 border border-[#aab] bg-[#f4f4f8]" />)}
        </div>
      </div>
      <BottomToolbar />
      <div className="flex h-[14px] shrink-0 items-center bg-[#f0f0f0] pl-[20px] text-[9.5px] text-[#444]">
        <span className="w-[669px] shrink-0 whitespace-nowrap text-[10px]">绘制 2 个Y 列数据的双Y轴及对右Y偏移轴图</span>
        <span className="w-[177px] shrink-0 whitespace-nowrap">平均值=255.83333 求和=3070 计数=16</span>
        <span className="w-[89px] shrink-0 whitespace-nowrap">AU : 开</span>
        <span className="shrink-0 whitespace-nowrap">1: [Book2]Sheet3!1[1]:4[4] 弧度</span>
      </div>
      <Dropdown />
      <AppsPanel />
      <svg width="22" height="24" viewBox="0 0 22 24" className="absolute left-0 top-[532px]">
        <circle cx="10" cy="12" r="11" fill="#e05050" />
        <path d="M2 18L8 11L12 13L18 6" fill="none" stroke="#f6b0b0" strokeWidth="1.2" strokeDasharray="2 1" />
      </svg>
    </div>
  );
}
